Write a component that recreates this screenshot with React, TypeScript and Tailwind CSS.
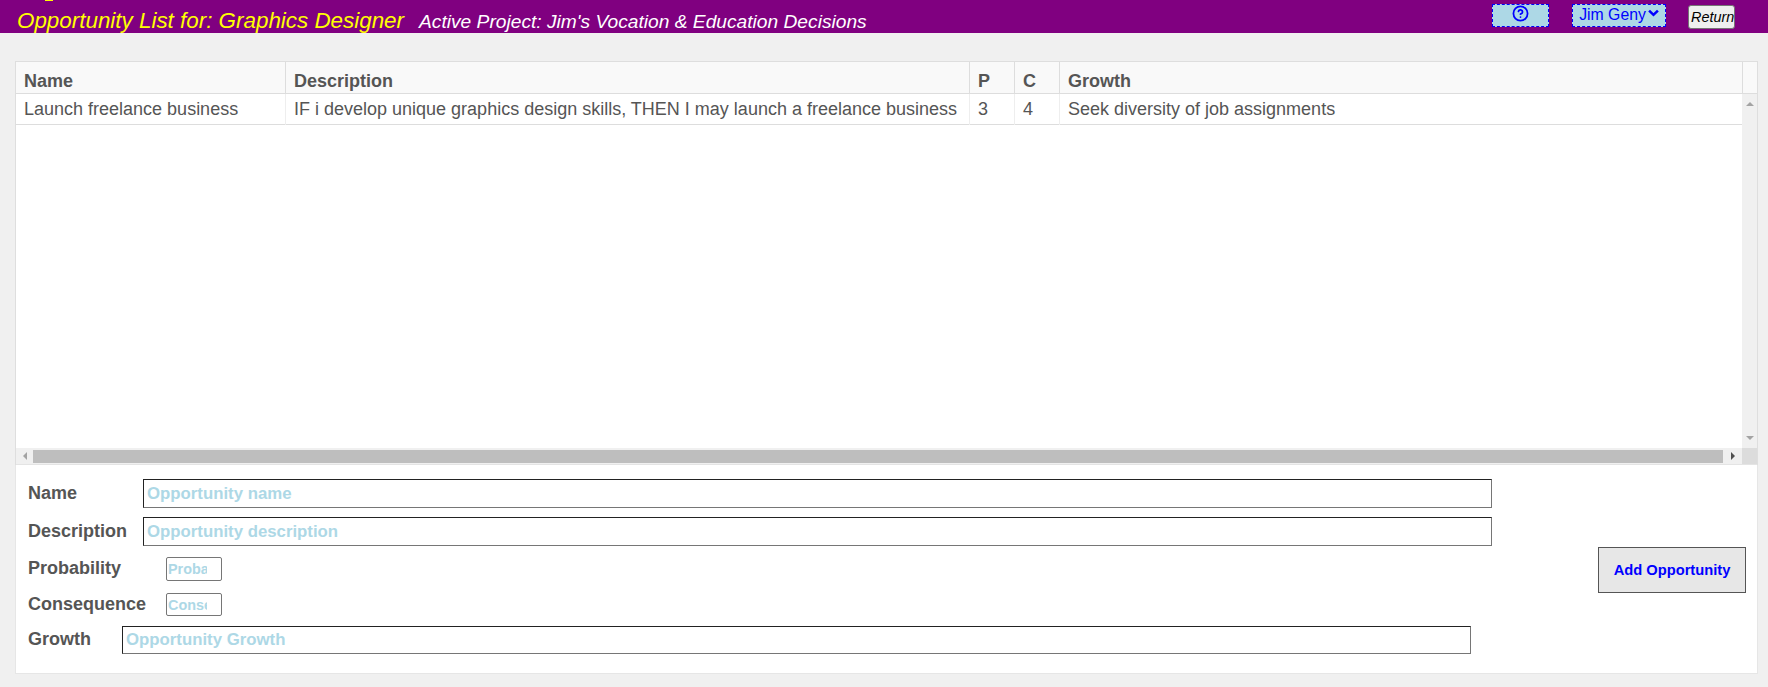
import { CircleHelp } from "lucide-react";

const SANS = "font-['Liberation_Sans',Arial,sans-serif]";

const inputBase =
  "block border bg-white font-bold text-[#555] outline-none placeholder:text-[#add8e6] placeholder:opacity-100";
const insetInput = `${inputBase} border-t-[#222] border-l-[#222] border-r-[#767676] border-b-[#767676] px-[3px] text-[16.8px]`;
const smallInput = `${inputBase} w-[56px] rounded-[2px] border-[#767676] pl-[1px] pr-[14px] text-[14.4px]`;
const labelCls = "mb-[1px] font-bold text-[18px] text-[#555]";

function Header() {
  return (
    <header className="relative flex h-[33px] items-start bg-[#800080] pl-[17px]">
      <div className="absolute left-[45px] top-0 h-px w-[8px] bg-[#ffff00]" />
      <h1 className="mt-[7px] text-[22.4px] italic leading-[28px] text-[#ffff00]">Opportunity List for: Graphics Designer</h1>
      <p className="ml-[15px] mt-[10px] text-[19.2px] italic leading-[24px] text-white">
        Active Project: Jim's Vocation &amp; Education Decisions
      </p>
      <div className="ml-auto flex items-start">
        <button
          type="button"
          className="mt-[4px] flex h-[23px] w-[57px] justify-center border border-dashed border-[#0000ff] bg-[#add8e6] text-[#0000ff]"
        >
          <CircleHelp size={17} strokeWidth={2.5} />
        </button>
        <button
          type="button"
          className="ml-[23px] mt-[4px] flex h-[23px] w-[94px] items-start justify-center border border-dashed border-[#0000ff] bg-[#add8e6] text-[15.8px] leading-[20px] text-[#0000ff]"
        >
          Jim Geny
          <svg viewBox="0 0 12 8" className="ml-[2px] mt-[4px] h-[8px] w-[11px]" fill="none" stroke="#0000ff" strokeWidth="2.8">
            <path d="M1.2 1.4 6 6 10.8 1.4" />
          </svg>
        </button>
        <button
          type="button"
          className="ml-[22px] mr-[33px] mt-[5px] h-[24px] w-[47px] overflow-hidden whitespace-nowrap rounded-[3px] border border-[#767676] bg-[#efefef] pl-[2px] text-left text-[14.4px] italic leading-[20px] text-black"
        >
          Return
        </button>
      </div>
    </header>
  );
}

const GRID = "grid grid-cols-[270px_684px_45px_45px_1fr]";

function OpportunityTable() {
  return (
    <div className="mx-[15px] mt-[28px] w-[1743px] border-x border-t border-[#dedede] text-[#555]">
      <div className={`${GRID} h-[32px] border-b border-[#ddd] bg-[#f9f9f9] pr-[14px] font-bold text-[18px] leading-[38px]`}>
        {["Name", "Description", "P", "C", "Growth"].map((h) => (
          <div key={h} className="border-r border-[#ddd] pl-[8px]">
            {h}
          </div>
        ))}
      </div>
      <div className="flex h-[354px] bg-white">
        <div className="min-w-0 flex-1">
          <div className={`${GRID} h-[31px] border-b border-[#ddd] text-[18px] leading-[31px]`}>
            <div className="border-r border-[#eee] pl-[8px]">Launch freelance business</div>
            <div className="overflow-hidden whitespace-nowrap border-r border-[#eee] pl-[8px]">
              IF i develop unique graphics design skills, THEN I may launch a freelance business
            </div>
            <div className="border-r border-[#eee] pl-[8px]">3</div>
            <div className="border-r border-[#eee] pl-[8px]">4</div>
            <div className="pl-[8px]">Seek diversity of job assignments</div>
          </div>
        </div>
        <div className="flex w-[15px] flex-col items-center justify-between bg-[#f0f0f0] py-[8px]">
          <svg viewBox="0 0 8 4" className="h-[4px] w-[8px]" fill="#a3a3a3"><path d="M4 0 8 4H0z" /></svg>
          <svg viewBox="0 0 8 4" className="h-[4px] w-[8px]" fill="#a3a3a3"><path d="M0 0h8L4 4z" /></svg>
        </div>
      </div>
      <div className="flex h-[17px] items-stretch border-b border-[#e4e4e4] bg-[#f0f0f0]">
        <div className="flex w-[17px] items-center justify-center">
          <svg viewBox="0 0 4 8" className="h-[8px] w-[4px]" fill="#a3a3a3"><path d="M4 0v8L0 4z" /></svg>
        </div>
        <div className="mt-[2px] h-[13px] flex-1 bg-[#bebebe]" />
        <div className="flex w-[19px] items-center justify-center">
          <svg viewBox="0 0 4 8" className="h-[8px] w-[4px]" fill="#505050"><path d="M0 0v8l4-4z" /></svg>
        </div>
        <div className="w-[15px] bg-[#dcdcdc]" />
      </div>
    </div>
  );
}

function OpportunityForm() {
  return (
    <div className="mx-[15px] flex h-[209px] w-[1743px] items-center border-x border-b border-t-0 border-[#e6e6e6] bg-white">
      <div className="h-full w-[1477px] pl-[12px] pt-[14px]">
        <div className="flex h-[29px] items-center">
          <label className={`${labelCls} w-[115px]`}>Name</label>
          <input className={`${insetInput} h-[29px] w-[1349px]`} placeholder="Opportunity name" />
        </div>
        <div className="mt-[9px] flex h-[29px] items-center">
          <label className={`${labelCls} w-[115px]`}>Description</label>
          <input className={`${insetInput} h-[29px] w-[1349px]`} placeholder="Opportunity description" />
        </div>
        <div className="mt-[11px] flex h-[24px] items-center">
          <label className={`${labelCls} w-[138px]`}>Probability</label>
          <input className={`${smallInput} h-[24px]`} placeholder="Probability" />
        </div>
        <div className="mt-[12px] flex h-[23px] items-center">
          <label className={`${labelCls} w-[138px]`}>Consequence</label>
          <input className={`${smallInput} h-[23px]`} placeholder="Consequence" />
        </div>
        <div className="mt-[10px] flex h-[28px] items-center">
          <label className={`${labelCls} w-[94px]`}>Growth</label>
          <input className={`${insetInput} h-[28px] w-[1349px]`} placeholder="Opportunity Growth" />
        </div>
      </div>
      <button
        type="button"
        className="ml-[105px] mt-[2px] h-[46px] w-[148px] border border-[#555] bg-[#e7e7e7] text-[14.7px] font-bold text-[#0000ff]"
      >
        Add Opportunity
      </button>
    </div>
  );
}

export default function App() {
  return (
    <div className={`${SANS} h-[687px] w-[1768px] overflow-hidden bg-[#f0f0f0]`}>
      <Header />
      <OpportunityTable />
      <OpportunityForm />
    </div>
  );
}
